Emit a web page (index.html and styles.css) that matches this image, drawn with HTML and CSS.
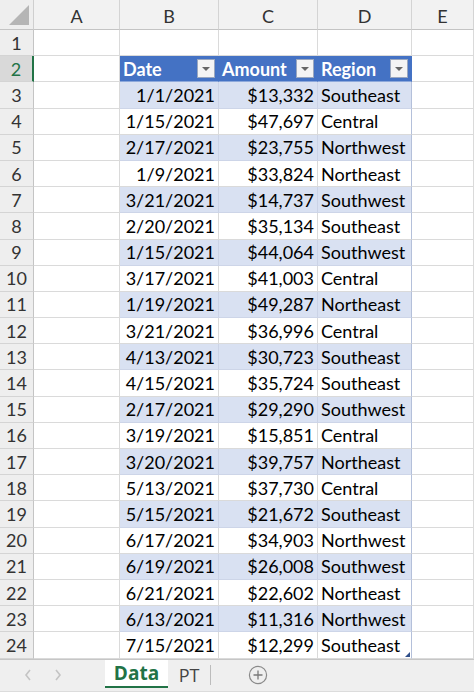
FILE: index.html
```html
<!DOCTYPE html>
<html>
<head>
<meta charset="utf-8">
<link rel="stylesheet" href="styles.css">
</head>
<body>
<div class="sheet">
  <div class="corner"><span class="tri"></span></div>
  <div class="ch">A</div><div class="ch">B</div><div class="ch">C</div><div class="ch">D</div><div class="ch">E</div>

  <div class="rh">1</div><div class="c"></div><div class="c"></div><div class="c"></div><div class="c"></div><div class="c"></div>

  <div class="rh sel">2</div><div class="c"></div>
  <div class="c th"><span>Date</span><span class="dd"></span></div>
  <div class="c th"><span>Amount</span><span class="dd"></span></div>
  <div class="c th last"><span>Region</span><span class="dd"></span></div>
  <div class="c"></div>

  <div class="rh">3</div><div class="c"></div><div class="c b num">1/1/2021</div><div class="c b num">$13,332</div><div class="c b last">Southeast</div><div class="c"></div>
  <div class="rh">4</div><div class="c"></div><div class="c num">1/15/2021</div><div class="c num">$47,697</div><div class="c last">Central</div><div class="c"></div>
  <div class="rh">5</div><div class="c"></div><div class="c b num">2/17/2021</div><div class="c b num">$23,755</div><div class="c b last">Northwest</div><div class="c"></div>
  <div class="rh">6</div><div class="c"></div><div class="c num">1/9/2021</div><div class="c num">$33,824</div><div class="c last">Northeast</div><div class="c"></div>
  <div class="rh">7</div><div class="c"></div><div class="c b num">3/21/2021</div><div class="c b num">$14,737</div><div class="c b last">Southwest</div><div class="c"></div>
  <div class="rh">8</div><div class="c"></div><div class="c num">2/20/2021</div><div class="c num">$35,134</div><div class="c last">Southeast</div><div class="c"></div>
  <div class="rh">9</div><div class="c"></div><div class="c b num">1/15/2021</div><div class="c b num">$44,064</div><div class="c b last">Southwest</div><div class="c"></div>
  <div class="rh">10</div><div class="c"></div><div class="c num">3/17/2021</div><div class="c num">$41,003</div><div class="c last">Central</div><div class="c"></div>
  <div class="rh">11</div><div class="c"></div><div class="c b num">1/19/2021</div><div class="c b num">$49,287</div><div class="c b last">Northeast</div><div class="c"></div>
  <div class="rh">12</div><div class="c"></div><div class="c num">3/21/2021</div><div class="c num">$36,996</div><div class="c last">Central</div><div class="c"></div>
  <div class="rh">13</div><div class="c"></div><div class="c b num">4/13/2021</div><div class="c b num">$30,723</div><div class="c b last">Southeast</div><div class="c"></div>
  <div class="rh">14</div><div class="c"></div><div class="c num">4/15/2021</div><div class="c num">$35,724</div><div class="c last">Southeast</div><div class="c"></div>
  <div class="rh">15</div><div class="c"></div><div class="c b num">2/17/2021</div><div class="c b num">$29,290</div><div class="c b last">Southwest</div><div class="c"></div>
  <div class="rh">16</div><div class="c"></div><div class="c num">3/19/2021</div><div class="c num">$15,851</div><div class="c last">Central</div><div class="c"></div>
  <div class="rh">17</div><div class="c"></div><div class="c b num">3/20/2021</div><div class="c b num">$39,757</div><div class="c b last">Northeast</div><div class="c"></div>
  <div class="rh">18</div><div class="c"></div><div class="c num">5/13/2021</div><div class="c num">$37,730</div><div class="c last">Central</div><div class="c"></div>
  <div class="rh">19</div><div class="c"></div><div class="c b num">5/15/2021</div><div class="c b num">$21,672</div><div class="c b last">Southeast</div><div class="c"></div>
  <div class="rh">20</div><div class="c"></div><div class="c num">6/17/2021</div><div class="c num">$34,903</div><div class="c last">Northwest</div><div class="c"></div>
  <div class="rh">21</div><div class="c"></div><div class="c b num">6/19/2021</div><div class="c b num">$26,008</div><div class="c b last">Southwest</div><div class="c"></div>
  <div class="rh">22</div><div class="c"></div><div class="c num">6/21/2021</div><div class="c num">$22,602</div><div class="c last">Northeast</div><div class="c"></div>
  <div class="rh">23</div><div class="c"></div><div class="c b num">6/13/2021</div><div class="c b num">$11,316</div><div class="c b last">Northwest</div><div class="c"></div>
  <div class="rh">24</div><div class="c"></div><div class="c num">7/15/2021</div><div class="c num">$12,299</div><div class="c last end">Southeast<span class="handle"></span></div><div class="c"></div>
</div>
<div class="tabbar">
  <div class="nav">
    <svg width="8" height="12" viewBox="0 0 8 12"><path d="M6 1 L2 6 L6 11" fill="none" stroke="#c4c4c4" stroke-width="1.6"/></svg>
    <svg width="8" height="12" viewBox="0 0 8 12"><path d="M2 1 L6 6 L2 11" fill="none" stroke="#c4c4c4" stroke-width="1.6"/></svg>
  </div>
  <div class="tab active">Data</div>
  <div class="tab">PT</div>
  <div class="add">
    <svg width="20" height="20" viewBox="0 0 20 20"><circle cx="10" cy="10" r="8.6" fill="none" stroke="#8a8a8a" stroke-width="1.2"/><path d="M10 5.5 V14.5 M5.5 10 H14.5" stroke="#7a7a7a" stroke-width="1.3"/></svg>
  </div>
</div>
</body>
</html>
```
FILE: styles.css
```css
html, body {
  margin: 0;
  padding: 0;
  width: 474px;
  height: 692px;
  overflow: hidden;
  background: #ffffff;
  font-family: Lato, "Open Sans", sans-serif;
  font-size: 18px;
  color: #000;
}

.sheet {
  display: grid;
  grid-template-columns: 34px 86px 99px 99px 94px 62px;
  grid-template-rows: 30px repeat(24, 26.2px);
}

.sheet > div {
  box-sizing: border-box;
  display: flex;
  align-items: center;
  white-space: nowrap;
  overflow: hidden;
}

.corner {
  background: #eeeeee;
  border-right: 1px solid #cfcfcf;
  border-bottom: 1px solid #c4c4c4;
  position: relative;
}

.corner .tri {
  position: absolute;
  right: 4px;
  bottom: 4px;
  width: 0;
  height: 0;
  border-left: 20px solid transparent;
  border-bottom: 20px solid #b5b5b5;
}

.ch {
  background: #f2f2f2;
  border-right: 1px solid #d4d4d4;
  border-bottom: 1px solid #c4c4c4;
  justify-content: center;
  color: #333;
  padding-top: 2px;
}

.rh {
  background: #eeeeee;
  border-right: 1px solid #c4c4c4;
  border-bottom: 1px solid #d4d4d4;
  justify-content: center;
  color: #333;
}

.rh.sel {
  background: #d9d9d9;
  color: #217346;
  border-right: 2px solid #217346;
}

.c {
  border-right: 1px solid #dadada;
  border-bottom: 1px solid #dadada;
  padding: 0 3px;
}

.c.b {
  background: #d9e1f2;
  border-right-color: #cbd3e6;
  border-bottom-color: #cdd5e8;
}

.c.num {
  justify-content: flex-end;
  padding-right: 3px;
}

.c.last {
  border-right: 1px solid #b4c0da;
}

.c.th {
  background: #4472c4;
  color: #ffffff;
  font-weight: 700;
  justify-content: space-between;
  padding: 0 3px 0 3px;
  border-right-color: #4472c4;
  border-bottom-color: #8ea9db;
}

.c.th.last {
  border-right-color: #4472c4;
}

.dd {
  width: 18px;
  height: 19px;
  box-sizing: border-box;
  background: #f4f4f4;
  border: 1px solid #9aa7bf;
  position: relative;
}

.dd::after {
  content: "";
  position: absolute;
  left: 4px;
  top: 7px;
  border-left: 4px solid transparent;
  border-right: 4px solid transparent;
  border-top: 4px solid #666;
}

.c.end {
  position: relative;
}

.handle {
  position: absolute;
  right: 1px;
  bottom: 1px;
  width: 0;
  height: 0;
  border-left: 5px solid transparent;
  border-bottom: 5px solid #2f4f8a;
}

.tabbar {
  box-sizing: border-box;
  height: 34px;
  background: #efefef;
  border-top: 1px solid #c6c6c6;
  border-bottom: 2px solid #dcdcdc;
  display: flex;
  align-items: stretch;
}

.nav {
  width: 105px;
  display: flex;
  align-items: center;
  gap: 22px;
  padding-left: 24px;
  box-sizing: border-box;
}

.tab {
  display: flex;
  align-items: center;
  justify-content: center;
  color: #444;
  font-size: 19px;
  font-family: "Open Sans", Lato, sans-serif;
}

.tab.active {
  width: 63px;
  background: #ffffff;
  color: #217346;
  font-weight: 700;
  border-bottom: 2px solid #217346;
  margin-bottom: 3px;
  box-sizing: border-box;
  padding-top: 1px;
}

.tab:not(.active) {
  width: 42px;
  margin: 5px 0 6px;
  border-right: 1px solid #bcbcbc;
  font-size: 18px;
}

.add {
  display: flex;
  align-items: center;
  margin-left: 37px;
}
```
